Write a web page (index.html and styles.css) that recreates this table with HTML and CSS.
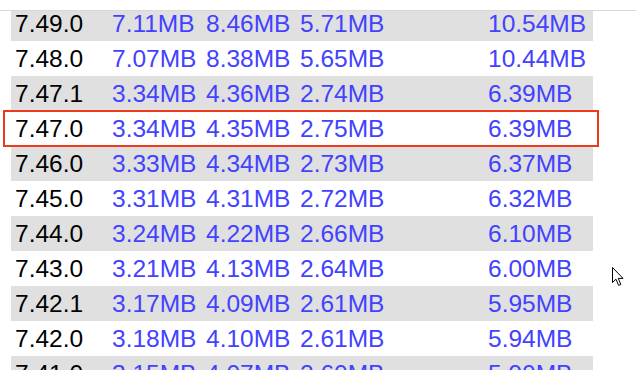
FILE: index.html
```html
<!DOCTYPE html>
<html>
<head>
<meta charset="utf-8">
<link rel="stylesheet" href="styles.css">
</head>
<body>
<div class="topbar"></div>
<div class="viewport">
  <div class="list">
    <div class="row alt"><span class="ver">7.49.0</span><span>7.11MB</span><span>8.46MB</span><span>5.71MB</span><span>10.54MB</span></div>
    <div class="row"><span class="ver">7.48.0</span><span>7.07MB</span><span>8.38MB</span><span>5.65MB</span><span>10.44MB</span></div>
    <div class="row alt"><span class="ver">7.47.1</span><span>3.34MB</span><span>4.36MB</span><span>2.74MB</span><span>6.39MB</span></div>
    <div class="row marked"><span class="ver">7.47.0</span><span>3.34MB</span><span>4.35MB</span><span>2.75MB</span><span>6.39MB</span></div>
    <div class="row alt"><span class="ver">7.46.0</span><span>3.33MB</span><span>4.34MB</span><span>2.73MB</span><span>6.37MB</span></div>
    <div class="row"><span class="ver">7.45.0</span><span>3.31MB</span><span>4.31MB</span><span>2.72MB</span><span>6.32MB</span></div>
    <div class="row alt"><span class="ver">7.44.0</span><span>3.24MB</span><span>4.22MB</span><span>2.66MB</span><span>6.10MB</span></div>
    <div class="row"><span class="ver">7.43.0</span><span>3.21MB</span><span>4.13MB</span><span>2.64MB</span><span>6.00MB</span></div>
    <div class="row alt"><span class="ver">7.42.1</span><span>3.17MB</span><span>4.09MB</span><span>2.61MB</span><span>5.95MB</span></div>
    <div class="row"><span class="ver">7.42.0</span><span>3.18MB</span><span>4.10MB</span><span>2.61MB</span><span>5.94MB</span></div>
    <div class="row alt"><span class="ver">7.41.0</span><span>3.15MB</span><span>4.07MB</span><span>2.60MB</span><span>5.90MB</span></div>
  </div>
</div>
<svg class="cursor" width="14" height="21" viewBox="0 0 14 21"><path d="M0.5 0.5 L0.5 15.5 L4 12.2 L6.6 18.4 L8.8 17.5 L6.3 11.4 L11 11.4 Z" fill="#fff" stroke="#000" stroke-width="1" stroke-linejoin="miter"/></svg>
</body>
</html>
```
FILE: styles.css
```css
html, body {
  margin: 0;
  padding: 0;
  background: #fff;
  overflow: hidden;
}
body {
  width: 636px;
  height: 370px;
  position: relative;
  font-family: "Liberation Sans", Arial, sans-serif;
  font-size: 24.5px;
}
.topbar {
  height: 10px;
  border-bottom: 1px solid #d8d8d8;
  background: #fff;
}
.viewport {
  height: 359px;
  overflow: hidden;
}
.list {
  margin-top: -5px;
  padding-left: 11px;
}
.row {
  width: 582px;
  box-sizing: border-box;
  height: 35px;
  line-height: 35px;
  padding-left: 4px;
  display: grid;
  grid-template-columns: 97px 94px 94px 188px 1fr;
  color: #4242ff;
  white-space: nowrap;
}
.row.alt {
  background: #e0e0e0;
}
.row .ver {
  color: #000;
}
.row.marked {
  position: relative;
}
.row.marked::after {
  content: "";
  position: absolute;
  left: -8px;
  right: -6px;
  top: -1px;
  bottom: -1px;
  border: 2px solid #ee3a1c;
  pointer-events: none;
}
.cursor {
  position: absolute;
  left: 612px;
  top: 267px;
}
```
